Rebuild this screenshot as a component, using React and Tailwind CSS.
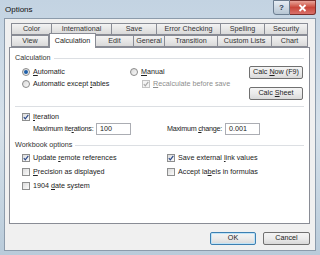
import React from 'react';

const font = { fontFamily: '"Liberation Sans", Arial, sans-serif' };

function U({ children }) {
  return <span className="underline underline-offset-[1px]">{children}</span>;
}

function Radio({ checked }) {
  return (
    <span className="w-[8px] h-[8px] rounded-full border border-[#8a8a8a] bg-gradient-to-br from-[#d8d8d8] to-[#fafafa] flex items-center justify-center shrink-0">
      {checked && <span className="w-[4px] h-[4px] rounded-full bg-[#1f5fa8]" />}
    </span>
  );
}

function Check({ checked, disabled }) {
  return (
    <span
      className={
        'w-[8px] h-[8px] border flex items-center justify-center shrink-0 ' +
        (disabled ? 'border-[#c4c4c4] bg-[#f4f4f4]' : 'border-[#8e8f8f] bg-gradient-to-br from-[#dcdcdc] to-[#fbfbfb]')
      }
    >
      {checked && (
        <svg width="6" height="6" viewBox="0 0 6 6">
          <path d="M0.8 3.2 L2.3 4.8 L5.3 0.8" fill="none" stroke={disabled ? '#a8a8a8' : '#2d4a8a'} strokeWidth="1.2" />
        </svg>
      )}
    </span>
  );
}

function Btn({ children, def, w = 'w-[54px]' }) {
  return (
    <div
      className={
        w +
        ' h-[13px] rounded-[2px] border flex items-center justify-center text-[7.2px] text-[#222] bg-gradient-to-b from-[#f4f4f4] via-[#ebebeb] to-[#d9d9d9] ' +
        (def ? 'border-[#3c7fb1] shadow-[inset_0_0_0_1px_#bfe3f7]' : 'border-[#707070]')
      }
    >
      <span className="whitespace-nowrap">{children}</span>
    </div>
  );
}

function Tab({ label, w, selected }) {
  if (selected) {
    return (
      <div className={w + ' h-[15px] -mt-[2px] -mb-[1px] relative z-10 bg-white border border-b-0 border-[#898c95] flex items-center justify-center text-[7.2px] text-[#222]'}>
        {label}
      </div>
    );
  }
  return (
    <div className={w + ' h-full bg-gradient-to-b from-[#f3f3f3] to-[#dadada] border border-l-0 border-[#898c95] first:border-l flex items-center justify-center text-[7.2px] text-[#333]'}>
      {label}
    </div>
  );
}

function GroupLabel({ children }) {
  return (
    <div className="flex items-center gap-[3px] text-[7.2px] text-[#333] h-[10px]">
      <span>{children}</span>
      <span className="flex-1 h-px bg-[#dcdfe3]" />
    </div>
  );
}

export default function App() {
  return (
    <div style={font} className="w-[320px] h-[255px] overflow-hidden flex flex-col bg-gradient-to-b from-[#c3d3e2] via-[#d6e1ea] to-[#b9cbda] text-[#222]">
      {/* title bar */}
      <div className="h-[18px] flex items-start">
        <div className="pl-[5px] pt-[4px] text-[8px] text-[#111]">Options</div>
        <div className="flex-1" />
        <div className="flex mr-[4px]">
          <div className="w-[17px] h-[15px] rounded-bl-[3px] border border-[#6b7d90] bg-gradient-to-b from-[#e6edf4] to-[#b6c5d3] flex items-center justify-center text-[8px] text-[#2c3e55] font-bold">?</div>
          <div className="w-[26px] h-[15px] rounded-br-[3px] border border-l-0 border-[#7a2e2a] bg-gradient-to-b from-[#e8a49a] via-[#c9463a] to-[#d9706a] flex items-center justify-center">
            <svg width="9" height="8" viewBox="0 0 9 8">
              <path d="M1.5 1 L7.5 7 M7.5 1 L1.5 7" stroke="#fff" strokeWidth="1.8" />
            </svg>
          </div>
        </div>
      </div>

      {/* client area */}
      <div className="mx-[4px] h-[233px] bg-[#f0f0f0] border border-[#8c9bab] flex flex-col pl-[4px] pr-[5px] pt-[4px]">
        {/* tabs */}
        <div className="ml-[2px] w-[297px]">
          <div className="flex h-[12px]">
            <Tab label="Color" w="w-[41px]" />
            <Tab label="International" w="w-[60px]" />
            <Tab label="Save" w="w-[45px]" />
            <Tab label="Error Checking" w="w-[64px]" />
            <Tab label="Spelling" w="w-[44px]" />
            <Tab label="Security" w="w-[43px]" />
          </div>
          <div className="flex h-[12px] items-end">
            <Tab label="View" w="w-[38px]" />
            <Tab label="Calculation" w="w-[47px]" selected />
            <Tab label="Edit" w="w-[38px]" />
            <Tab label="General" w="w-[31px]" />
            <Tab label="Transition" w="w-[53px]" />
            <Tab label="Custom Lists" w="w-[54px]" />
            <Tab label="Chart" w="w-[36px]" />
          </div>
        </div>

        {/* panel */}
        <div className="w-[301px] h-[177px] bg-white border border-[#898c95] px-[5px] pt-[5px] text-[7.2px] whitespace-nowrap">
          <GroupLabel>Calculation</GroupLabel>
          <div className="flex mt-[3px]">
            <div className="w-[115px] pl-[7px] flex flex-col gap-[4px] pt-[2px]">
              <div className="flex items-center gap-[3px] h-[8px]"><Radio checked /><span><U>A</U>utomatic</span></div>
              <div className="flex items-center gap-[3px] h-[8px]"><Radio /><span>Automatic except <U>t</U>ables</span></div>
            </div>
            <div className="w-[119px] flex flex-col gap-[4px] pt-[2px]">
              <div className="flex items-center gap-[3px] h-[8px]"><Radio /><span><U>M</U>anual</span></div>
              <div className="flex items-center gap-[3px] h-[8px] pl-[12px] text-[#8d8d8d]"><Check checked disabled /><span><U>R</U>ecalculate before save</span></div>
            </div>
            <div className="flex flex-col gap-[8px]">
              <Btn>Calc <U>N</U>ow (F9)</Btn>
              <Btn>Calc <U>S</U>heet</Btn>
            </div>
          </div>
          <div className="h-px bg-[#dcdfe3] mt-[6px]" />
          <div className="pl-[7px] mt-[6px]">
            <div className="flex items-center gap-[3px] h-[8px]"><Check checked /><span><U>I</U>teration</span></div>
            <div className="flex items-center mt-[2px] h-[12px] pl-[11px]">
              <div className="w-[134px] flex items-center">
                <span className="w-[63px] tracking-[-0.2px]">Maximum ite<U>r</U>ations:</span>
                <div className="w-[35px] h-[12px] border border-[#abadb3] bg-white flex items-center pl-[3px]">100</div>
              </div>
              <span className="w-[58px] tracking-[-0.25px]">Maximum <U>c</U>hange:</span>
              <div className="w-[35px] h-[12px] border border-[#abadb3] bg-white flex items-center pl-[3px]">0.001</div>
            </div>
          </div>
          <div className="mt-[5px]">
            <GroupLabel>Workbook options</GroupLabel>
          </div>
          <div className="grid grid-cols-[145px_1fr] gap-y-[6px] pl-[7px] mt-[4px]">
            <div className="flex items-center gap-[3px] h-[8px]"><Check checked /><span>Update <U>r</U>emote references</span></div>
            <div className="flex items-center gap-[3px] h-[8px]"><Check checked /><span>Save external <U>l</U>ink values</span></div>
            <div className="flex items-center gap-[3px] h-[8px]"><Check /><span><U>P</U>recision as displayed</span></div>
            <div className="flex items-center gap-[3px] h-[8px]"><Check /><span>Accept la<U>b</U>els in formulas</span></div>
            <div className="flex items-center gap-[3px] h-[8px]"><Check /><span>1904 <U>d</U>ate system</span></div>
          </div>
        </div>

        {/* dialog buttons */}
        <div className="flex justify-end gap-[7px] mt-[8px] w-[301px]">
          <Btn def w="w-[46px]">OK</Btn>
          <Btn w="w-[47px]">Cancel</Btn>
        </div>
      </div>
    </div>
  );
}
